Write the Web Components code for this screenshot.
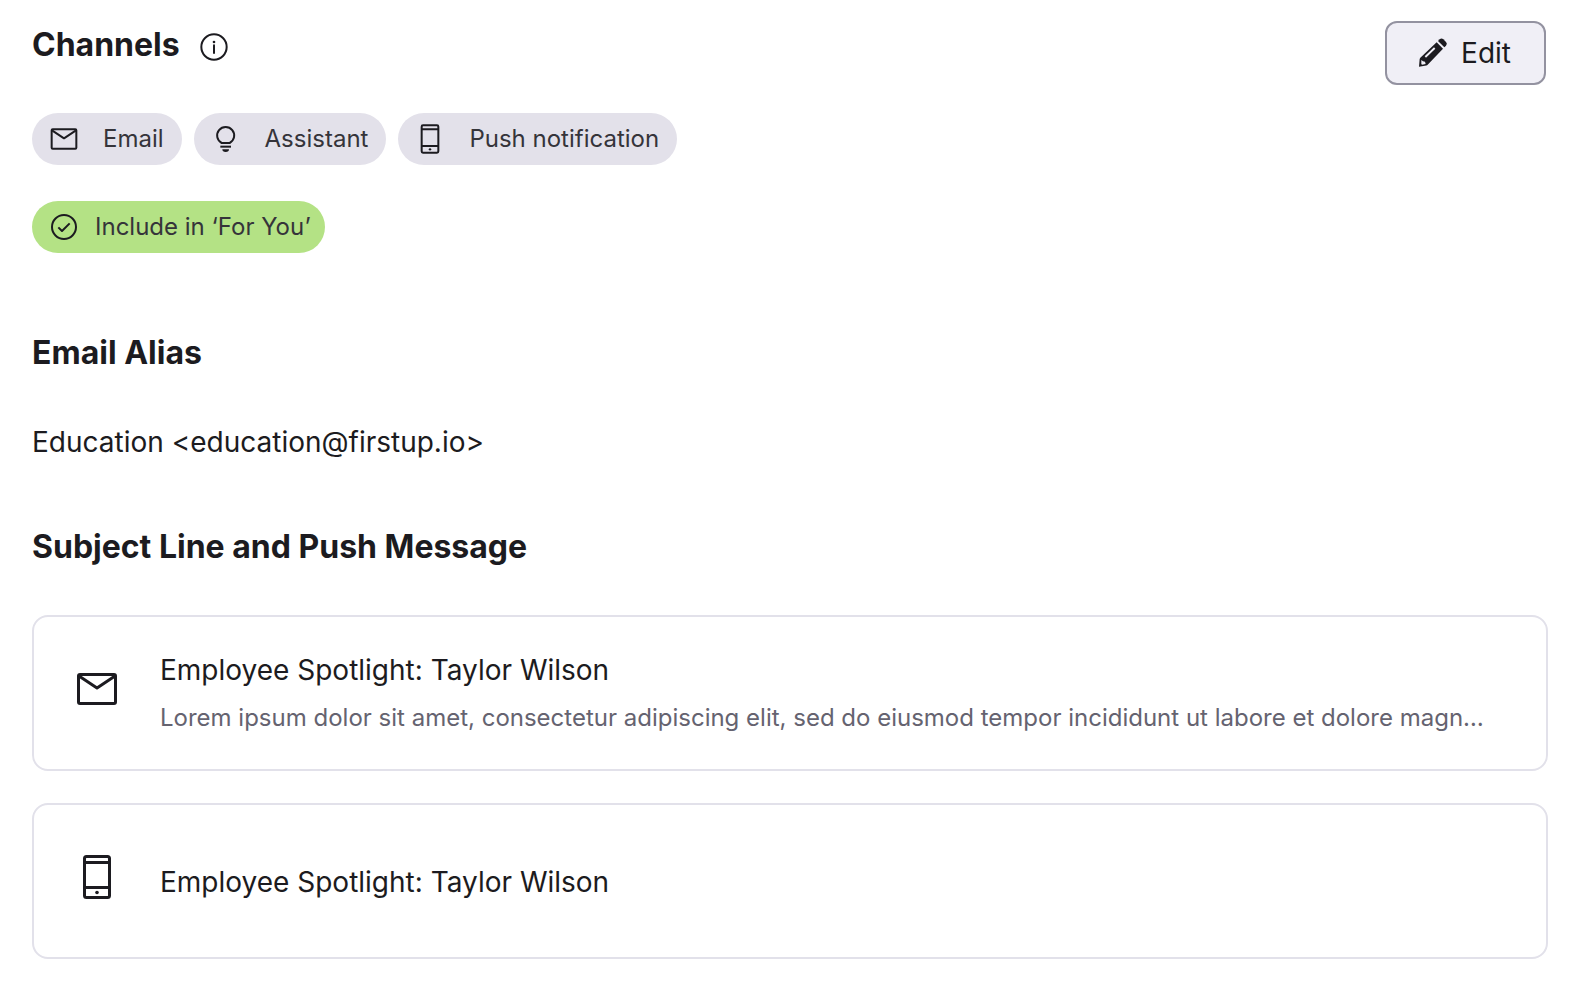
<!DOCTYPE html>
<html lang="en">
<head>
<meta charset="utf-8">
<title>Channels</title>
<style>
  body {
    margin: 0;
    background: #fff;
    color: #1c1b20;
    font-family: Inter, "Liberation Sans", sans-serif;
    font-size: 28px;
    line-height: 48px;
  }
</style>
</head>
<body>

<channel-summary></channel-summary>

<template id="channel-summary">
  <style>
    :host {
      display: block;
      padding: 21px 36px 24px 32px;
    }

    header {
      display: flex;
      justify-content: space-between;
      align-items: flex-start;
      margin-bottom: 28px;
    }

    .title {
      display: flex;
      align-items: flex-end;
      gap: 18px;
    }

    .title ui-icon {
      margin-bottom: 6px;
    }

    h2 {
      margin: 0;
      font-size: 32px;
      font-weight: 700;
      line-height: 48px;
    }

    .chips {
      display: flex;
      flex-wrap: wrap;
      gap: 12px;
      margin-bottom: 36px;
    }

    .alias {
      margin-top: 76px;
    }

    p {
      margin: 41px 0 57px;
    }

    .messages {
      display: flex;
      flex-direction: column;
      gap: 32px;
      margin-top: 44px;
    }
  </style>

  <header>
    <div class="title">
      <h2>Channels</h2>
      <ui-icon name="info" size="32"></ui-icon>
    </div>
    <edit-button>Edit</edit-button>
  </header>

  <div class="chips">
    <channel-chip icon="mail">Email</channel-chip>
    <channel-chip icon="bulb">Assistant</channel-chip>
    <channel-chip icon="phone">Push notification</channel-chip>
  </div>
  <div class="chips">
    <channel-chip icon="check" active>Include in ‘For You’</channel-chip>
  </div>

  <h2 class="alias">Email Alias</h2>
  <p>Education &lt;education@firstup.io&gt;</p>

  <h2>Subject Line and Push Message</h2>
  <div class="messages">
    <message-card icon="mail">
      Employee Spotlight: Taylor Wilson
      <span slot="preview">Lorem ipsum dolor sit amet, consectetur adipiscing elit, sed do eiusmod tempor incididunt ut labore et dolore magn…</span>
    </message-card>
    <message-card icon="phone">Employee Spotlight: Taylor Wilson</message-card>
  </div>
</template>

<template id="channel-chip">
  <style>
    :host {
      display: flex;
      align-items: center;
      gap: 23px;
      height: 52px;
      padding: 0 18px 0 16px;
      box-sizing: border-box;
      border-radius: 26px;
      background: #e3e1ea;
      font-size: 24px;
      white-space: nowrap;
    }

    :host([active]) {
      gap: 15px;
      padding-right: 14px;
      background: #b4e285;
    }

    span {
      color: #35343a;
    }
  </style>
  <ui-icon size="32"></ui-icon>
  <span><slot></slot></span>
</template>

<template id="edit-button">
  <style>
    :host {
      display: block;
      padding-right: 2px;
    }

    button {
      display: flex;
      align-items: center;
      gap: 12px;
      height: 64px;
      padding: 0 33px 0 30px;
      border: 2px solid #9392a0;
      border-radius: 12px;
      background: #f0eff6;
      color: inherit;
      font: inherit;
      cursor: pointer;
    }
  </style>
  <button type="button">
    <ui-icon name="pencil" size="32"></ui-icon>
    <slot></slot>
  </button>
</template>

<template id="message-card">
  <style>
    :host {
      display: flex;
      align-items: center;
      gap: 39px;
      padding: 29px 61px 27px 39px;
      border: 2px solid #e2e1ea;
      border-radius: 16px;
    }

    ui-icon {
      margin-bottom: 10px;
    }

    .text {
      display: flex;
      flex-direction: column;
      justify-content: center;
      flex: 1;
      min-width: 0;
      min-height: 96px;
    }

    ::slotted([slot="preview"]) {
      overflow: hidden;
      color: #656370;
      font-size: 24px;
      text-overflow: ellipsis;
      white-space: nowrap;
    }
  </style>
  <ui-icon size="48"></ui-icon>
  <div class="text">
    <div><slot></slot></div>
    <slot name="preview"></slot>
  </div>
</template>

<script>

// Line icons, all drawn on a 48 unit grid
const ICONS = {
  mail: `<rect x="5.5" y="9.5" width="37" height="29" rx="1.5"/>
    <path d="M6 11l18 12 18-12"/>`,
  phone: `<rect x="11.5" y="3.5" width="25" height="41" rx="2"/>
    <path d="M11.5 9.5h25M11.5 34.5h25"/>
    <circle cx="24" cy="39.5" r="1.8" fill="currentColor" stroke="none"/>`,
  bulb: `<path d="M17.500 30a12.800 12.800 0 1 1 12 0z"/>
    <path d="M15.500 35.500h16"/>
    <path d="M18.500 39.500h10a5 4 0 0 1-10 0z" fill="currentColor" stroke="none"/>`,
  check: `<circle cx="24" cy="24" r="18"/>
    <path d="M15.500 24.500l5.500 5.500 11.500-11.500"/>`,
  info: `<circle cx="24" cy="24" r="19"/>
    <path d="M24 21.500v11.500" stroke-linecap="round"/>
    <circle cx="24" cy="16.500" r="2" fill="currentColor" stroke="none"/>`,
  pencil: `<g fill="currentColor" stroke="none">
      <path fill-rule="evenodd" d="M29.500 8l9.500 9.500L16 41.500q-.7 1-2 1.300L3 44.500 4 33q.2-1 1-2zM25.500 15.500L11.500 29l2 2 14-13.500zM6.500 34.500v6l1 1 5.500-1-1-3.500-3-.5z"/>
      <path d="M31.500 6l2.500-2.500a4 4 0 0 1 5.500 0l4 4a4 4 0 0 1 0 5.500L41 15.500z"/>
    </g>`
};

// Attaches an open shadow root filled from the template with the given id
function render(host, id) {
  const template = document.getElementById(id);
  const root = host.attachShadow({mode: 'open'});
  root.appendChild(template.content.cloneNode(true));
  return root;
}

/**
 * Inline svg icon
 * name - a key of ICONS
 * size - width and height in px
 */
class UiIcon extends HTMLElement {
  static get observedAttributes() {
    return ['name', 'size'];
  }

  constructor() {
    super();
    this.attachShadow({mode: 'open'});
  }

  attributeChangedCallback() {
    const size = this.getAttribute('size') || 32;
    this.shadowRoot.innerHTML = `
      <style>
        :host { display: block; flex: none; }
        svg { display: block; }
      </style>
      <svg width="${size}" height="${size}" viewBox="0 0 48 48" fill="none"
        stroke="currentColor" stroke-width="3" stroke-linejoin="round" aria-hidden="true">
        ${ICONS[this.getAttribute('name')] || ''}
      </svg>`;
  }
}

class ChannelChip extends HTMLElement {
  constructor() {
    super();
    const root = render(this, 'channel-chip');
    root.querySelector('ui-icon').setAttribute('name', this.getAttribute('icon'));
  }
}

class EditButton extends HTMLElement {
  constructor() {
    super();
    render(this, 'edit-button');
  }
}

class MessageCard extends HTMLElement {
  constructor() {
    super();
    const root = render(this, 'message-card');
    root.querySelector('ui-icon').setAttribute('name', this.getAttribute('icon'));
  }
}

class ChannelSummary extends HTMLElement {
  constructor() {
    super();
    render(this, 'channel-summary');
  }
}

// The page element goes first, so its children are upgraded in place
customElements.define('channel-summary', ChannelSummary);
customElements.define('ui-icon', UiIcon);
customElements.define('channel-chip', ChannelChip);
customElements.define('edit-button', EditButton);
customElements.define('message-card', MessageCard);

</script>
</body>
</html>
